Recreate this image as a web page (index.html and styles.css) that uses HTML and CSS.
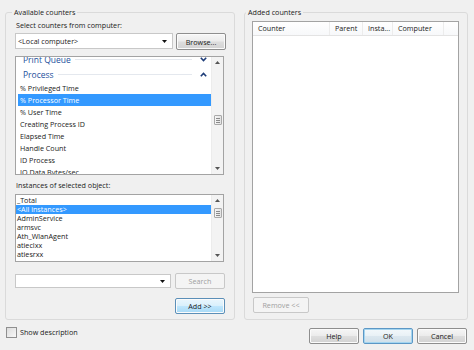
FILE: index.html
```html
<!DOCTYPE html>
<html lang="en">
  <head>
    <title>Add Counters</title>
    <link rel="stylesheet" href="styles.css">
  </head>
  <body>
    <div id="dialog">
      <div id="groups">
        <div class="group" id="available_group">
          <div class="group-title">Available counters</div>
          <div class="field-label">Select counters from computer:</div>
          <div class="row">
            <div class="combo" id="computer_combo">
              <span>&lt;Local computer&gt;</span>
              <svg class="combo-arrow" width="5" height="3" viewBox="0 0 5 3"><path d="M0 0h5l-2.5 3z"/></svg>
            </div>
            <button class="btn" id="browse_button">Browse...</button>
          </div>

          <div class="listbox" id="counter_list">
            <div class="list-items">
              <div class="cat-row first-cat">
                <span class="cat-name">Print Queue</span>
                <span class="cat-line"></span>
                <svg class="chevron" width="7" height="5" viewBox="0 0 7 5"><path d="M0.8 0.8l2.7 2.7 2.7-2.7"/></svg>
              </div>
              <div class="cat-row">
                <span class="cat-name">Process</span>
                <span class="cat-line"></span>
                <svg class="chevron" width="7" height="5" viewBox="0 0 7 5"><path d="M0.8 4.2l2.7-2.7 2.7 2.7"/></svg>
              </div>
              <div class="item">% Privileged Time</div>
              <div class="item selected">% Processor Time</div>
              <div class="item">% User Time</div>
              <div class="item">Creating Process ID</div>
              <div class="item">Elapsed Time</div>
              <div class="item">Handle Count</div>
              <div class="item">ID Process</div>
              <div class="item">IO Data Bytes/sec</div>
            </div>
            <div class="scrollbar">
              <svg class="sb-arrow" width="5" height="3" viewBox="0 0 5 3"><path d="M0 3h5l-2.5-3z"/></svg>
              <div class="sb-space" id="counter_space_top"></div>
              <div class="sb-thumb"><i></i><i></i><i></i></div>
              <div class="sb-space"></div>
              <svg class="sb-arrow" width="5" height="3" viewBox="0 0 5 3"><path d="M0 0h5l-2.5 3z"/></svg>
            </div>
          </div>

          <div class="field-label" id="instances_label">Instances of selected object:</div>
          <div class="listbox" id="instance_list">
            <div class="list-items">
              <div class="inst">_Total</div>
              <div class="inst selected">&lt;All instances&gt;</div>
              <div class="inst">AdminService</div>
              <div class="inst">armsvc</div>
              <div class="inst">Ath_WlanAgent</div>
              <div class="inst">atieclxx</div>
              <div class="inst">atiesrxx</div>
              <div class="inst">audiodg</div>
            </div>
            <div class="scrollbar">
              <svg class="sb-arrow" width="5" height="3" viewBox="0 0 5 3"><path d="M0 3h5l-2.5-3z"/></svg>
              <div class="sb-space" id="instance_space_top"></div>
              <div class="sb-thumb"><i></i><i></i><i></i></div>
              <div class="sb-space"></div>
              <svg class="sb-arrow" width="5" height="3" viewBox="0 0 5 3"><path d="M0 0h5l-2.5 3z"/></svg>
            </div>
          </div>

          <div class="row" id="search_row">
            <div class="combo" id="search_combo">
              <span></span>
              <svg class="combo-arrow" width="5" height="3" viewBox="0 0 5 3"><path d="M0 0h5l-2.5 3z"/></svg>
            </div>
            <button class="btn disabled" id="search_button">Search</button>
          </div>
          <div class="row right">
            <button class="btn hot" id="add_button">Add &gt;&gt;</button>
          </div>
        </div>

        <div class="group" id="added_group">
          <div class="group-title">Added counters</div>
          <div class="table" id="added_table">
            <div class="table-head">
              <div class="col col-counter">Counter</div>
              <div class="col col-parent">Parent</div>
              <div class="col col-inst">Insta...</div>
              <div class="col col-comp">Computer</div>
            </div>
          </div>
          <button class="btn disabled" id="remove_button">Remove &lt;&lt;</button>
        </div>
      </div>

      <div id="bottom_bar">
        <label class="check">
          <span class="check-box"></span>
          <span>Show description</span>
        </label>
        <div id="dialog_buttons">
          <button class="btn">Help</button>
          <button class="btn default">OK</button>
          <button class="btn">Cancel</button>
        </div>
      </div>
    </div>
  </body>
</html>
```

FILE: styles.css
```css
body {
  margin: 0;
  background-color: #f0f0f0;
  font-family: "Open Sans", "Noto Sans", sans-serif;
  font-size: 7.2px;
  color: #1a1a1a;
}

#dialog {
  width: 474px;
  height: 350px;
  display: flex;
  flex-direction: column;
}

#groups {
  display: flex;
  padding-left: 5px;
  gap: 9px;
}

.group {
  margin-top: 12px;
  height: 306px;
  border: 1px solid #dadada;
  border-radius: 3px;
  display: flex;
  flex-direction: column;
}

#available_group {
  width: 219px;
  padding-left: 9px;
}

#added_group {
  width: 222px;
}

.group-title {
  margin: -6px 0 0 -3px;
  padding: 0 2px;
  width: fit-content;
  line-height: 11px;
  background-color: #f0f0f0;
}

#added_group .group-title {
  margin-left: 1px;
}

.field-label {
  margin-top: 2px;
  padding-left: 1px;
  line-height: 11px;
}

#instances_label {
  margin-top: 5px;
}

.row {
  display: flex;
  align-items: flex-start;
  gap: 3px;
  margin-top: 2px;
}

.row.right {
  justify-content: flex-end;
  width: 210px;
  margin-top: 9px;
}

.combo {
  height: 14px;
  border: 1px solid #c8c8c8;
  background-color: #fff;
  display: flex;
  align-items: center;
  padding-left: 2px;
}

.combo span {
  flex: 1;
  line-height: 12px;
}

.combo-arrow {
  margin-right: 5px;
  fill: #111;
}

#computer_combo {
  width: 154px;
}

.btn {
  font-family: inherit;
  font-size: 7.2px;
  color: #1a1a1a;
  height: 17px;
  width: 50px;
  padding: 0;
  border: 1px solid #8e8e8e;
  border-radius: 2px;
  background: linear-gradient(#f6f6f6, #ececec 48%, #dedede 52%, #d2d2d2);
  box-shadow: inset 0 0 0 1px #fbfbfb;
}

.btn.disabled {
  color: #a0a0a0;
  border-color: #c8c8c8;
  background: #f4f4f4;
  box-shadow: none;
}

.btn.hot {
  border-color: #5b8fb8;
  background: linear-gradient(#eaf6fd, #d9f0fc 48%, #bee6fd 52%, #a7d9f5);
}

.btn.default {
  border-color: #5c97c5;
  box-shadow: inset 0 0 0 1px #a4d5f0;
  background: linear-gradient(#f3f8fb, #e9f1f6 48%, #dbe7ef 52%, #d0dfe9);
}

#search_row {
  margin-top: 11px;
  gap: 4px;
}

#search_combo {
  height: 12px;
  width: 152px;
  margin-top: 1px;
}

#search_button {
  height: 16px;
}

#add_button {
  height: 16px;
}

.listbox {
  width: 207px;
  border: 1px solid #a3a3a3;
  background-color: #fff;
  display: flex;
  overflow: hidden;
}

#counter_list {
  margin-top: 6px;
  height: 117px;
}

#instance_list {
  margin-top: 3px;
  height: 66px;
}

.list-items {
  flex: 1;
  overflow: hidden;
}

#counter_list .list-items {
  padding-left: 2px;
}

.cat-row {
  height: 15px;
  display: flex;
  align-items: center;
  padding-left: 5px;
  padding-right: 4px;
  gap: 4px;
  color: #23509c;
}

.first-cat {
  margin-top: -5px;
}

.cat-name {
  font-size: 8.5px;
}

.cat-line {
  flex: 1;
  height: 1px;
  background-color: #e4e8ee;
}

.chevron {
  margin-left: 4px;
  fill: none;
  stroke: #1d3c78;
  stroke-width: 1.6;
}

.item {
  height: 12px;
  line-height: 12px;
  padding-left: 2px;
  white-space: nowrap;
}

.inst {
  height: 9px;
  line-height: 9px;
  padding-left: 1px;
  white-space: nowrap;
}

.inst:first-child {
  margin-top: 1px;
}

.selected {
  background-color: #3399ff;
  color: #fff;
}

.scrollbar {
  width: 11px;
  background-color: #f3f3f3;
  border-left: 1px solid #ececec;
  display: flex;
  flex-direction: column;
  align-items: center;
}

.sb-arrow {
  fill: #555;
  margin: 4px 0;
}

#counter_space_top {
  flex: 0 0 47px;
}

#instance_space_top {
  flex: 0 0 2px;
}

.sb-space {
  flex: 1;
}

.sb-thumb {
  width: 8px;
  height: 10px;
  border: 1px solid #a9a9a9;
  border-radius: 1px;
  background: linear-gradient(90deg, #f5f5f5, #e3e3e3);
  display: flex;
  flex-direction: column;
  align-items: center;
  justify-content: center;
  gap: 1px;
  box-sizing: border-box;
}

.sb-thumb i {
  display: block;
  width: 4px;
  height: 1px;
  background-color: #8a8a8a;
}

.table {
  margin: 3px 0 0 7px;
  width: 205px;
  height: 270px;
  border: 1px solid #a3a3a3;
  background-color: #fff;
}

.table-head {
  display: flex;
  height: 13px;
  border-bottom: 1px solid #e3e3e3;
  background: linear-gradient(#fff, #f7f8fa);
}

.col {
  line-height: 13px;
  padding-left: 5px;
  border-right: 1px solid #ececec;
  white-space: nowrap;
  overflow: hidden;
}

.col-counter {
  width: 71px;
}

.col-parent {
  width: 27px;
}

.col-inst {
  width: 24px;
}

.col-comp {
  width: 45px;
}

#remove_button {
  margin: 4px 0 0 8px;
  width: 56px;
  height: 16px;
}

#bottom_bar {
  display: flex;
  align-items: flex-start;
  justify-content: space-between;
  padding: 7px 7px 0 6px;
}

.check {
  display: flex;
  align-items: center;
  gap: 3px;
  line-height: 11px;
}

.check-box {
  width: 9px;
  height: 9px;
  border: 1px solid #8f8f8f;
  background: linear-gradient(135deg, #dcdcdc, #f8f8f8);
}

#dialog_buttons {
  display: flex;
  gap: 4px;
  margin-top: 1px;
}

#dialog_buttons .btn {
  height: 16px;
}
```
